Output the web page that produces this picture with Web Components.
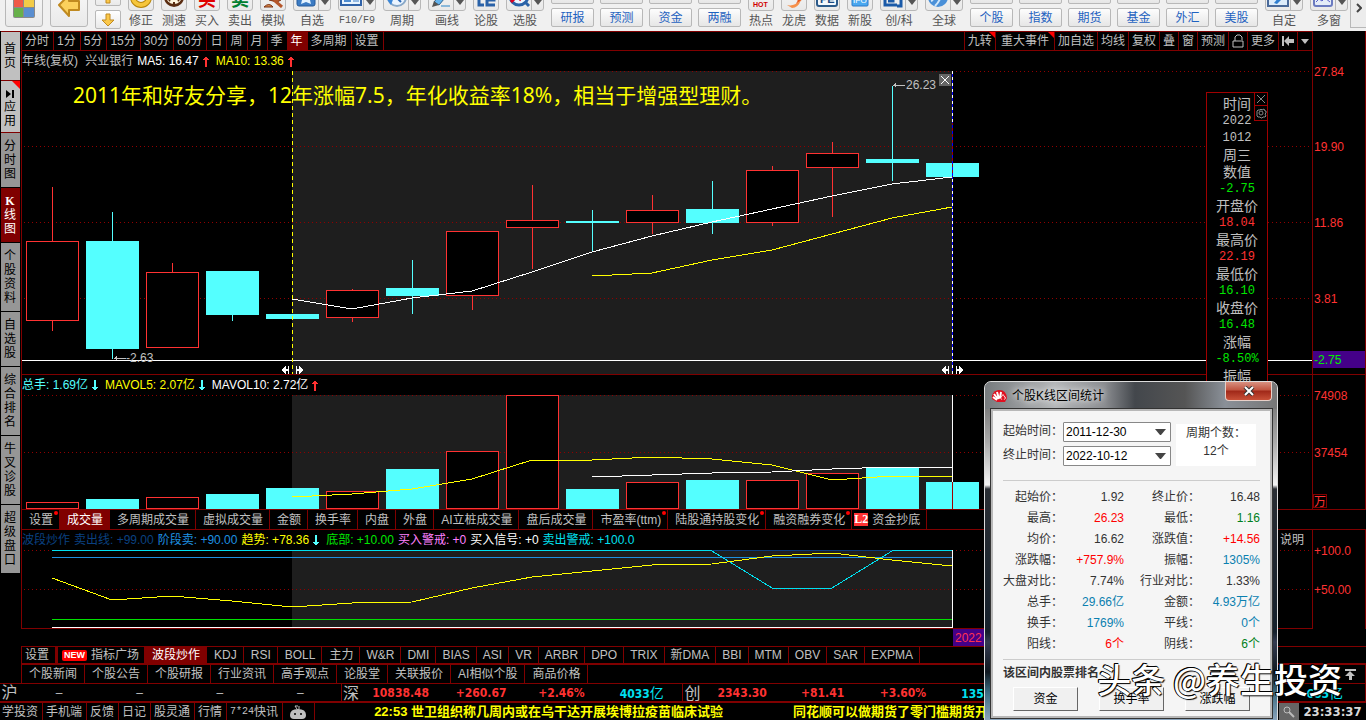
<!DOCTYPE html>
<html lang="zh-CN">
<head>
<meta charset="utf-8">
<title>兴业银行 年线</title>
<style>
html, body { margin: 0; background: #000; overflow: hidden; }
body { font: 12px/16px "Liberation Sans", "Noto Sans CJK SC", sans-serif; color: #c0c0c0; }
</style>
</head>
<body>
<stock-app></stock-app>
<script>
const LINE = '#800000', RED = '#ff3232', CYAN = '#54ffff', YEL = '#ffff00';
const BASE = `*{box-sizing:border-box} button{font:inherit;color:inherit;background:none;border:0;padding:0;margin:0} svg{display:block}`;

function define(name, css, html) {
  customElements.define(name, class extends HTMLElement {
    constructor() {
      super();
      this.attachShadow({ mode: 'open' });
    }
    connectedCallback() {
      this.shadowRoot.innerHTML = `<style>${BASE}${css}</style>` + (typeof html === 'function' ? html(this) : html);
    }
  });
}

/* ---------- toolbar ---------- */
const ICONS = {
  fix: '<circle cx="13" cy="17" r="8" fill="none" stroke="#b8860b" stroke-width="6"/><circle cx="13" cy="17" r="8" fill="none" stroke="#f6c63c" stroke-width="4"/>',
  speed: '<circle cx="13" cy="17" r="10" fill="#5a2d12"/><circle cx="13" cy="16" r="8" fill="#fff7e0"/><path d="M13 16l3 3M8 21l1-1M13 24v-2M18 21l-1-1" stroke="#5a2d12" stroke-width="2"/>',
  buy: '<text x="4" y="26" font-size="18" font-weight="bold" fill="#e00000">买</text>',
  sell: '<text x="4" y="26" font-size="18" font-weight="bold" fill="#008030">卖</text>',
  sim: '<path d="M9 20l6-9 6 9-4 2z" fill="#b5562a" stroke="#7b3010"/><path d="M14 20l8 7" stroke="#b5562a" stroke-width="3"/><path d="M4 27q5-5 9 0z" fill="#d98a4a" stroke="#7b3010"/>',
  star: '<rect x="4" y="8" width="18" height="18" rx="2" fill="#3c7cc4" stroke="#245a9a"/><path d="M13 12l3 5 5 1-4 2 1 4-5-2-5 2 1-4-4-2 5-1z" fill="#e4f3ff"/>',
  doc: '<rect x="3" y="8" width="20" height="17" fill="#e8f4ff" stroke="#2f62a8" stroke-width="2"/><path d="M15 15h6M15 18h6M15 21h6" stroke="#3c7cc4"/><rect x="6" y="14" width="7" height="8" fill="#4f8cd0"/>',
  clock: '<circle cx="14" cy="17" r="9" fill="#eaf4ff" stroke="#88a8c8" stroke-width="2"/><path d="M14 12v6l4 4" stroke="#2a68b8" stroke-width="2" fill="none"/><path d="M3 18l5 7 3-8z" fill="#3a86d8"/>',
  pen: '<path d="M6 22L18 8l4 4L11 25z" fill="#64b4ee" stroke="#33638c"/><path d="M4 27l2-6 5 4z" fill="#555"/><path d="M13 26h9" stroke="#8ab8da" stroke-width="2"/>',
  lun: '<path d="M6 16v9h5M14 14v11h8M14 14h7v6h-7" fill="none" stroke="#2a62a8" stroke-width="3"/>',
  pick: '<circle cx="13" cy="16" r="9" fill="#eef6ff" stroke="#2a62a8" stroke-width="3"/><path d="M5 22l6-6 3 3 5-7" stroke="#e00020" stroke-width="3" fill="none"/><path d="M19 22l4 4" stroke="#2a62a8" stroke-width="3"/>',
  hot: '<circle cx="9" cy="15" r="5" fill="#f9823a"/><circle cx="17" cy="15" r="5" fill="#f9823a"/><circle cx="13" cy="17" r="3" fill="#ffe070"/><text x="5" y="27" font-size="7" font-weight="bold" fill="#d00000">HOT</text>',
  tiger: '<path d="M3 18q6-6 12-2t7-4q2 9-8 12q6-5-2-5t-9-1z" fill="#e85a20"/><path d="M6 25q7 2 14-5q-3 8-9 8z" fill="#f6904a"/>',
  data: '<rect x="3" y="8" width="20" height="18" rx="2" fill="#f4f8fc" stroke="#2b5a8a" stroke-width="2"/><text x="6" y="23" font-size="11" font-weight="bold" fill="#1a4a80">PE</text>',
  ipo: '<rect x="5" y="7" width="16" height="19" rx="1" fill="#4aa8f0" stroke="#2a78c8"/><text x="6" y="23" font-size="8" fill="#fff">IPO</text>',
  cy: '<path d="M5 14v11h12M5 16h8v5H8M17 12v8M21 11v15h-4" fill="none" stroke="#1a5aa8" stroke-width="3"/>',
  globe: '<circle cx="13" cy="17" r="10" fill="#4a90d8"/><path d="M6 12q4 8 0 9M12 8q8 8-2 18M20 12q-5 6 2 6" stroke="#cfe6fa" stroke-width="2" fill="none"/>',
  edit: '<rect x="3" y="8" width="20" height="18" fill="#dcecfb" stroke="#4a6a9a" stroke-width="2"/><path d="M9 23L19 11l3 3-10 10z" fill="#2f7ed0"/>',
  multi: '<rect x="4" y="8" width="18" height="18" rx="2" fill="#e4ecf8" stroke="#6a7ac0" stroke-width="2"/><path d="M6 22l3-3 3 2 3-3 5 4" stroke="#5a62c8" fill="none"/>'
};

define('tool-item', `
  :host{display:block;flex:none}
  button{display:block;color:#555;text-align:center}
  .b{display:flex;height:40px;border:1px solid #b8b8b8;border-radius:3px;background:linear-gradient(#fff,#e9e9e9);overflow:hidden}
  .b>svg{flex:none;margin-top:8px}
  .d{width:12px;border-left:1px solid #b8b8b8;padding:28px 0 0 2px}
  .l{display:block;height:20px;line-height:20px;white-space:nowrap}
  .m{font-family:"Liberation Mono","Noto Sans CJK SC",monospace;font-size:10px}`,
  el => {
    const drop = el.hasAttribute('drop'), label = el.getAttribute('label');
    return `<button><span class="b"><svg width="24" height="28" viewBox="1 0 24 28">${ICONS[el.getAttribute('icon')]}</svg>${drop ? '<span class="d"><svg width="8" height="5"><path d="M0 0h8L4 5z" fill="#555"/></svg></span>' : ''}</span><span class="l ${/^F/.test(label) ? 'm' : ''}">${label}</span></button>`;
  });

define('tool-grid', `
  :host{display:grid;grid-auto-flow:column;grid-auto-columns:43px;grid-template-rows:19px 19px;gap:4px 6px;flex:none;padding-bottom:4px}
  button{border:1px solid #b8b8b8;border-radius:2px;background:linear-gradient(#fdfdfd,#e6e6e6);color:#1e62c0}`,
  el => el.getAttribute('items').split(',').map(t => `<button>${t}</button>`).join(''));

define('app-toolbar', `
  :host{display:flex;height:31px;overflow:hidden;align-items:flex-end;gap:7px;padding-left:5px;background:#f0f0f0}
  .big{width:38px;height:54px;flex:none;border:1px solid #b8b8b8;border-radius:3px;background:linear-gradient(#fff,#e9e9e9);margin-bottom:4px;display:flex;align-items:flex-end;justify-content:center;padding-bottom:8px}
  .ud{display:grid;gap:4px;flex:none;margin-bottom:2px}
  .ud button{width:26px;height:19px;border:1px solid #b8b8b8;border-radius:2px;background:linear-gradient(#fff,#e9e9e9);display:grid;place-items:center}
  .end{display:flex;align-items:flex-end;gap:2px;flex:1}
  .end tool-item+tool-item{margin-left:5px}
  .more{margin-left:auto;flex:none;width:17px;height:48px;margin-bottom:3px;border:1px solid #b8b8b8;background:#ececec;display:grid;justify-items:center;align-items:end;padding-bottom:14px}`, `
  <button class="big" aria-label="首页"><svg width="22" height="26"><rect width="22" height="26" rx="2" fill="#8a8a8a"/><path d="M1 5h9v10H1z" fill="#ef5a48"/><path d="M11 5h10v10H11z" fill="#f2cb48"/><path d="M1 16h9v9H1z" fill="#67b04a"/><path d="M11 16h10v9H11z" fill="#5a8ed0"/></svg></button>
  <button class="big" aria-label="后退"><svg width="24" height="28"><path d="M2 15L12 5v6h10v9H12v6z" fill="#fbd05c" stroke="#c08a20" stroke-linejoin="round" stroke-width="2"/></svg></button>
  <div class="ud"><button aria-label="上"><svg width="14" height="14"><path d="M7 1l6 6H9v6H5V7H1z" fill="#fbc84a" stroke="#c08a20"/></svg></button><button aria-label="下"><svg width="14" height="14"><path d="M7 13l6-6H9V1H5v6H1z" fill="#fbc84a" stroke="#c08a20"/></svg></button></div>
  <tool-item icon="fix" label="修正"></tool-item><tool-item icon="speed" label="测速"></tool-item>
  <tool-item icon="buy" label="买入"></tool-item><tool-item icon="sell" label="卖出"></tool-item>
  <tool-item icon="sim" label="模拟"></tool-item><tool-item icon="star" drop label="自选"></tool-item>
  <tool-item icon="doc" drop label="F10/F9"></tool-item><tool-item icon="clock" drop label="周期"></tool-item>
  <tool-item icon="pen" drop label="画线"></tool-item><tool-item icon="lun" label="论股"></tool-item>
  <tool-item icon="pick" drop label="选股"></tool-item>
  <tool-grid items="资讯,研报,竞价,预测,,资金,陆港,两融"></tool-grid>
  <tool-item icon="hot" label="热点"></tool-item><tool-item icon="tiger" label="龙虎"></tool-item>
  <tool-item icon="data" label="数据"></tool-item><tool-item icon="ipo" label="新股"></tool-item>
  <tool-item icon="cy" drop label="创/科"></tool-item><tool-item icon="globe" drop label="全球"></tool-item>
  <tool-grid items="板块,个股,股指,指数,期权,期货,债券,基金,美股,外汇,港股,美股"></tool-grid>
  <div class="end"><tool-item icon="edit" drop label="自定"></tool-item><tool-item icon="multi" drop label="多窗"></tool-item>
  <button class="more" aria-label="更多"><svg width="6" height="10"><path d="M1 1l4 4-4 4" fill="none" stroke="#444" stroke-width="2"/></svg></button></div>`);

/* ---------- side navigation ---------- */
define('side-nav', `
  :host{display:flex;flex-direction:column;width:21px;padding-left:1px;flex:none;color:#000;line-height:14px}
  button{width:19px;padding:6px 3px;background:#969696;border-bottom:1px solid #000;position:relative;text-align:center}
  button span{display:block;width:12px;word-break:break-all}
  .hd{background:#c0c0c0;min-height:50px;border-top:1px solid ${LINE};border-bottom:1px solid ${LINE}}
  .on{background:${LINE};color:#fff} b{font-family:"Liberation Serif",serif}
  .ap{padding:9px 3px 4px;background:#c0c0c0;border-bottom:1px solid ${LINE}}
  .ap svg{margin:0 0 2px 2px} .ap i{position:absolute;right:0;top:0;border:4px solid;border-color:#f00 #f00 transparent transparent}`, `
  <button class="hd"><span>首页</span></button>
  <button class="ap"><i></i><svg width="9" height="8"><path d="M0 0l5 4-5 4zM6 0h2v8H6z"/></svg><span>应用</span></button>
  <button><span>分时图</span></button>
  <button class="on"><span><b>K</b>线图</span></button>
  <button><span>个股资料</span></button><button><span>自选股</span></button>
  <button><span>综合排名</span></button><button><span>牛叉诊股</span></button><button><span>超级盘口</span></button>`);

/* ---------- tab strips ---------- */
define('tab-strip', `
  :host{display:flex;min-width:0;overflow:hidden;white-space:nowrap}
  :host([left]){border-left:1px solid ${LINE}}
  ::slotted(*){flex:none}`, `<slot></slot>`);

define('tab-item', `
  :host{display:block;border-right:1px solid ${LINE};color:#c0c0c0}
  :host([first]){border-left:1px solid ${LINE}}
  :host([on]){background:${LINE};color:#fff}
  button{height:100%;width:100%;display:flex;align-items:center;gap:4px;padding:0 var(--pr,6px) 0 var(--pl,7px);position:relative;white-space:nowrap}
  :host([dot]) button::after{content:"";position:absolute;right:1px;top:1px;width:4px;height:4px;border-radius:2px;background:#f00}
  :host([flag]) button::after{content:"";position:absolute;right:0;top:0;border:3px solid;border-color:#f00 #f00 transparent transparent}`,
  `<button><slot></slot></button>`);

/* ---------- legends ---------- */
const ARROW = { up: ['#ff3232', 'M3 0l3 4H4v7H2V4H0z'], down: [CYAN, 'M3 11L0 7h2V0h2v7h2z'] };
define('legend-row', `
  :host{display:flex;flex:1;height:20px;align-items:center;gap:4px;white-space:nowrap;border-left:1px solid ${LINE};min-width:0}
  ::slotted([end]){margin-left:auto}`, `<slot></slot>`);
define('legend-value', `
  :host{display:flex;align-items:center;gap:4px;color:var(--c)}
  :host([trend]){margin-right:3px}
  svg{shape-rendering:crispEdges}`,
  el => {
    const a = ARROW[el.getAttribute('trend')];
    return `<slot></slot>${a ? `<svg width="6" height="11"><path d="${a[1]}" fill="${a[0]}"/></svg>` : ''}`;
  });

/* ---------- charts ---------- */
const cx = i => 30 + 60 * i;
const bar = (i, kind, top, bottom, hi, lo) => {
  const x = cx(i), c = kind === 'r' ? RED : CYAN, h = Math.max(bottom - top, 2);
  let s = hi < top ? `<rect x="${x}" y="${hi}" width="1" height="${top - hi}" fill="${c}"/>` : '';
  if (lo > bottom) s += `<rect x="${x}" y="${bottom}" width="1" height="${lo - bottom}" fill="${c}"/>`;
  s += `<rect x="${x - 26}" y="${top}" width="53" height="${h}" fill="${c}"/>`;
  if (kind === 'r') s += `<rect x="${x - 25}" y="${top + 1}" width="51" height="${h - 2}" fill="#000"/>`;
  return s;
};
const curve = (c, start, ys) => `<polyline fill="none" stroke="${c}" points="${ys.map((y, k) => cx(start + k) + ',' + y).join(' ')}"/>`;
const hgrid = ys => ys.map(y => `<line x1="2" x2="100%" y1="${y}" y2="${y}" stroke="#900000" stroke-dasharray="1 3"/>`).join('');
const shade = h => `<rect x="270" y="0" width="660" height="${h}" fill="#1e1e1e"/>`;
const CHART_CSS = `:host{display:block;flex:1;min-width:0;border-left:1px solid ${LINE};position:relative;overflow:hidden}
  svg{width:100%;shape-rendering:crispEdges;font:12px "Liberation Sans",sans-serif}`;

const handle = x => `<path fill="#fff" d="M${x - 11} 299l5-4v3h2v2h-2v3zM${x - 4} 295h1v8h-1zM${x + 4} 295h1v8h-1zM${x + 12} 299l-5-4v3h-2v2h2v3z"/>`;
define('price-chart', CHART_CSS + `
  p{position:absolute;left:51px;top:9px;margin:0;color:${YEL};font:21px/30px "Noto Sans","Noto Sans CJK SC",sans-serif;white-space:nowrap}
  button{position:absolute;left:917px;top:3px;width:12px;height:12px;background:#666;display:grid;place-items:center}
  button svg{width:8px;shape-rendering:auto}`,
  () => {
    const k = [['r',170,250,116,260],['c',170,278,141,288],['r',201,277,192,277],['c',200,244,200,250],['c',243,248,243,248],
      ['r',219,247,218,251],['c',217,225,189,243],['r',160,225,160,239],['r',149,157,114,198],['c',150,152,139,181],
      ['r',139,152,124,163],['c',138,152,110,163],['r',99,152,95,155],['r',82,97,71,146],['c',88,92,15,110],['c',92,106,92,106]];
    return `<svg height="303">${shade(303)}${hgrid([0, 75, 151, 227])}
      ${k.map((v, i) => bar(i, ...v)).join('')}
      ${curve('#fff', 4, [228,238,227,220,201,181,165,151,138,125,113,106])}
      ${curve(YEL, 9, [205,202,189,179,163,147,136])}
      <rect x="0" y="289" width="100%" height="1" fill="#fff"/>
      <line x1="270" x2="270" y1="0" y2="303" stroke="${YEL}" stroke-dasharray="4 3"/>
      <rect x="930" y="0" width="1" height="303" fill="#00f"/><line x1="930" x2="930" y1="0" y2="303" stroke="#fff" stroke-dasharray="3 3"/>
      <rect x="930" y="52" width="1" height="54" fill="#a00000"/><line x1="930" x2="930" y1="54" y2="106" stroke="#00f" stroke-dasharray="3 3"/>
      <path d="M871 14h12v1h-12zM871 14l3-2v5zM92 287h12v1H92zM92 287l3-2v5z" fill="#c0c0c0"/>
      <text x="884" y="18" fill="#c0c0c0">26.23</text><text x="104" y="291" fill="#c0c0c0">-2.63</text>
      ${handle(270)}${handle(930)}</svg>
      <p>2011年和好友分享，12年涨幅7.5，年化收益率18%，相当于增强型理财。</p>
      <button aria-label="关闭区间"><svg height="8"><path d="M0 0l8 8M8 0L0 8" stroke="#fff"/></svg></button>`;
  });

define('volume-chart', CHART_CSS, () => {
  const v = [['r',107],['c',104],['r',102],['c',99],['c',93],['r',96],['c',74],['r',56],['r',0],['c',94],['r',87],['c',85],['r',85],['r',78],['c',72],['c',87]];
  return `<svg height="114">${shade(114)}${hgrid([0, 57])}
    ${v.map(([k, t], i) => bar(i, k, t, 114, t, 114)).join('')}
    ${curve(YEL, 4, [102,99,94,84,65,65,62,64,70,85,81,81])}
    ${curve('#fff', 9, [82,80,78,77,74,72,72])}
    <rect x="930" y="0" width="1" height="87" fill="#fff"/><rect x="930" y="87" width="1" height="27" fill="#a00000"/></svg>`;
});

define('wave-chart', CHART_CSS + `:host{border-bottom:1px solid ${LINE}}`, () => `<svg height="78">${shade(78)}${hgrid([0, 39])}
    <path d="M30 0h900v1H30z" fill="#0a3c7c"/><path d="M30 7h900v1H30z" fill="#1e90e0"/>
    <path d="M30 69h900v1H30z" fill="#00e000"/><path d="M30 77h900v1H30z" fill="#fff"/>
    <polyline fill="none" stroke="#00e0f0" points="690,1 750,38 810,38 870,1"/><path d="M30 0h660v1H30zM870 0h60v1h-60z" fill="#00e0f0"/>
    ${curve(YEL, 0, [28,50,46,51,57,53,52,38,27,21,15,14,6,3,10,16])}
    <rect x="930" y="0" width="1" height="78" fill="#fff"/></svg>`);

define('value-axis', `
  :host{display:block;width:54px;flex:none;border-left:1px solid ${LINE};border-right:1px solid ${LINE}}
  svg{width:100%;overflow:visible;font:12px "Liberation Sans","Noto Sans CJK SC",sans-serif}`,
  el => {
    const marks = (el.getAttribute('marks') || '').split(',').filter(Boolean).map(m => m.split('@'));
    const h = el.getAttribute('height') || 20;
    let s = marks.map(([t, y]) => `<text x="1" y="${+y + 4}" fill="${RED}">${t}</text>`).join('');
    if (el.hasAttribute('cursor')) s += `<rect y="280" width="100%" height="17" fill="#440088"/><text x="1" y="293" fill="#00f000">-2.75</text>`;
    if (el.hasAttribute('unit')) s += `<rect width="14" height="14" y="99" fill="${LINE}"/><rect width="12" height="12" x="1" y="100"/><text x="1" y="111" fill="${RED}">万</text>`;
    return `<svg height="${h}">${s}</svg>`;
  });

define('date-row', `:host{display:block} svg{width:100%}`,
  `<svg height="17" font-family="Liberation Sans" font-size="12"><rect x="932" width="80" height="17" fill="#440088"/><text x="934" y="13" fill="#ff3250">2022</text></svg>`);

/* ---------- cursor info panel ---------- */
define('info-panel', `
  :host{position:absolute;top:92px;right:98px;width:62px;height:300px;overflow:hidden;border:1px solid #a00000;background:#000;padding-top:3px;text-align:center}
  div{line-height:17px;height:17px;font-size:14px;color:#c0c0c0}
  .n{font-family:"Liberation Mono",monospace;font-size:12px}.g{color:#00e600}.r{color:#ff3232}
  .t{position:absolute;right:0;top:0;width:13px;height:28px;border-left:1px solid #a00000;border-bottom:1px solid #a00000;background:#000}
  .t button{display:grid;place-items:center;width:12px;height:13px;border-bottom:1px solid #a00000}.t button+button{border:0;height:14px}`, () => {
    const rows = [['时间'],['2022','n'],['1012','n'],['周三'],['数值'],['-2.75','n g'],['开盘价'],['18.04','n r'],['最高价'],['22.19','n r'],
      ['最低价'],['16.10','n g'],['收盘价'],['16.48','n g'],['涨幅'],['-8.50%','n g'],['振幅']];
    return rows.map(([t, c]) => `<div class="${c || ''}">${t}</div>`).join('') +
      `<span class="t"><button aria-label="关闭"><svg width="8" height="8"><path d="M0 0l8 8M8 0L0 8" stroke="#888"/></svg></button><button aria-label="选项"><svg width="11" height="11" fill="none" stroke="#888"><path d="M5 1l1 1 2-1 1 2h1v2l-1 1 1 2-1 1H7L6 10H5L4 9H2L1 8V3l1-1h2z"/><circle cx="5" cy="5" r="2"/></svg></button></span>`;
  });

/* ---------- range statistics dialog ---------- */
define('stats-dialog', `
  :host{position:absolute;top:381px;right:88px;width:294px;padding:0 5px 6px 6px;border-radius:7px 7px 0 0;border:1px solid #ddd;color:#333;
    background:linear-gradient(#888c90 0,#777 20px,#aaa 60px,#f4f4f4 103px,#2a2e34 107px,#15202c 250px,#343b50 260px,#101820 290px,#3a6a80 310px,#90a8c0 340px)}
  header{display:flex;align-items:center;height:27px;gap:4px;margin:0 -5px 0 -6px;padding-left:6px;color:#000;background:linear-gradient(90deg,#777b7e,#b4b6b8 70px,#8a8c90 120px,#43474c 150px,#555 200px,#8a9098 240px,#777);border-radius:6px 6px 0 0}
  h1{font:12px/18px "Liberation Sans","Noto Sans CJK SC",sans-serif;margin:0;text-shadow:0 0 6px #fff,0 0 8px #ddd}
  .x{margin:0 5px 0 auto;align-self:flex-start;width:47px;height:19px;border:1px solid #e8d0c8;border-top:0;border-radius:0 0 4px 4px;background:linear-gradient(#d89080,#c05440 45%,#a02818 50%,#c85038);display:grid;place-items:center}
  main{border:2px solid #b8b8b8;outline:1px solid #333;background:#f5f5f5;padding:11px 10px 5px}
  .top{display:grid;grid-template-columns:60px 108px 85px;gap:4px 0;justify-content:start}
  label{line-height:18px}
  select{appearance:none;width:108px;height:20px;border:1px solid #888;border-radius:1px;padding:0 2px;margin:0;background:#fff;font:12px "Liberation Sans",sans-serif;color:#000}
  .s{position:relative;display:block;height:20px}.s svg{position:absolute;right:5px;top:7px}
  .c{grid-column:3;grid-row:1/3;background:#fff;margin:2px 0 0 5px;width:80px;height:42px;text-align:center;line-height:18px}
  hr{border:0;border-top:1px solid #ccc;margin:14px 0 5px}
  table{border-spacing:0;table-layout:fixed;width:100%}
  th,td{padding:0;font-weight:normal;text-align:right;height:21px;white-space:nowrap}
  .r{color:#f00}.g{color:#008020}.b{color:#0a80b0}
  table+hr{margin:5px 0 4px}
  h2{font:bold 12px/18px "Liberation Sans","Noto Sans CJK SC",sans-serif;margin:0 0 5px}
  .btn{display:flex;gap:21px;padding-left:10px}
  .btn button{width:65px;height:24px;background:#f0f0f0;color:#000;border:1px solid;border-color:#fff #666 #666 #fff}`, () => {
    const rows = [['起始价','1.92','','终止价','16.48',''],['最高','26.23','r','最低','1.16','g'],['均价','16.62','','涨跌值','+14.56','r'],
      ['涨跌幅','+757.9%','r','振幅','1305%','b'],['大盘对比','7.74%','','行业对比','1.33%',''],['总手','29.66亿','b','金额','4.93万亿','b'],
      ['换手','1769%','b','平线','0个','b'],['阳线','6个','r','阴线','6个','g']];
    const tri = '<svg width="11" height="6"><path d="M0 0h11L6 6H5z" fill="#444"/></svg>';
    return `<header><svg width="17" height="14"><path d="M1 10Q0 3 7 1q8-1 9 8l-2 4H6z" fill="#e01020"/><path d="M3 5l4 5M6 3l2 7M10 3L9 9M2 8l4 3" stroke="#fff" stroke-width="2"/><path d="M12 5l3 4-2 2h-2L9 9z" fill="#fff"/><path d="M12 6l2 3-2 3-2-3z" fill="#e01020"/></svg><h1>个股K线区间统计</h1>
      <button class="x" aria-label="关闭"><svg width="12" height="10"><path d="M2 1l8 8M10 1L2 9" stroke="#333" stroke-width="4"/><path d="M2 1l8 8M10 1L2 9" stroke="#fff" stroke-width="2"/></svg></button></header>
    <main><div class="top">
      <label for="a">起始时间：</label><span class="s"><select id="a"><option>2011-12-30</option></select>${tri}</span>
      <label for="b">终止时间：</label><span class="s"><select id="b"><option>2022-10-12</option></select>${tri}</span>
      <div class="c">周期个数：<br>12个</div></div><hr>
      <table><colgroup><col style="width:60px"><col style="width:61px"><col style="width:76px"><col></colgroup>
      ${rows.map(r => `<tr><th scope="row">${r[0]}：</th><td class="${r[2]}">${r[1]}</td><th scope="row">${r[3]}：</th><td class="${r[5]}">${r[4]}</td></tr>`).join('')}</table><hr>
      <h2>该区间内股票排名</h2><div class="btn"><button>资金</button><button>换手率</button><button>涨跌幅</button></div></main>`;
  });

/* ---------- index quotes ---------- */
define('index-quote', `
  :host{display:grid;grid-template-columns:19px repeat(4,1fr);align-items:center;text-align:center;border-right:1px solid ${LINE};height:17px;min-width:0}
  b{font:bold 12px/17px "DejaVu Sans Condensed","DejaVu Sans","Noto Sans CJK SC",sans-serif;color:#ff3232;white-space:nowrap}
  i{font:16px/17px "Noto Sans CJK SC",sans-serif}.c{color:#00e0f0}.c i{font-size:14px;line-height:16px}.n{font-size:16px;line-height:17px}`,
  el => {
    const v = el.getAttribute('values').split(',');
    return `<span class="n">${el.getAttribute('name') || ''}</span>` + v.map((t, k) => t === '–' ? '<span>–</span>' : `<b class="${k === 3 ? 'c' : ''}">${t.replace('亿', '<i>亿</i>')}</b>`).join('');
  });
define('index-bar', `
  :host{display:grid;grid-template-columns:repeat(4,1fr);border-top:1px solid ${LINE};border-bottom:2px solid ${LINE}}`, `
  <index-quote name="沪" values="–,–,–,–"></index-quote>
  <index-quote name="深" values="10838.48,+260.67,+2.46%,4033亿"></index-quote>
  <index-quote name="创" values="2343.30,+81.41,+3.60%,1358亿"></index-quote>
  <index-quote values=",,,685亿"></index-quote>`);

/* ---------- bottom ticker ---------- */
define('ticker-bar', `
  :host{display:flex;height:17px;align-items:stretch;white-space:nowrap;overflow:hidden}
  tab-item{--pl:3px;--pr:4px;flex:none}
  tab-item:first-of-type{--pl:2px}
  .news{flex:1;min-width:0;overflow:hidden;display:flex;gap:70px;padding-left:59px}
  .news a{color:${YEL};text-decoration:none;font:bold 13px/17px "Liberation Sans","Noto Sans CJK SC",sans-serif}
  time{font:bold 13px/17px "DejaVu Sans Condensed","DejaVu Sans",sans-serif;color:#d8d8d8;width:67px;text-align:center;flex:none}
  .q{width:20px;background:#666;display:grid;place-items:center;flex:none}
  .m{font-family:"Liberation Mono",monospace;font-size:10px;margin-right:-4px}`, `
  <tab-item>学投资</tab-item><tab-item>手机端</tab-item><tab-item>反馈</tab-item><tab-item>日记</tab-item><tab-item>股灵通</tab-item><tab-item>行情</tab-item>
  <tab-item><span class="m">7*24</span>快讯</tab-item>
  <tab-item aria-label="机器人"><svg width="24" height="17"><path d="M4 12q0-6 8-6t8 6q0 4-4 4H8q-4 0-4-4z" fill="#c0c0c0"/><path d="M11 6l-2-3h3M13 6V3" stroke="#c0c0c0" fill="none"/><circle cx="9" cy="11" r="1"/><circle cx="15" cy="11" r="1"/></svg></tab-item>
  <div class="news"><a href="#">22:53 世卫组织称几周内或在乌干达开展埃博拉疫苗临床试验</a><a href="#">同花顺可以做期货了零门槛期货开户</a></div>
  <button class="q" aria-label="搜索"><svg width="12" height="12"><circle cx="4" cy="4" r="3" fill="none" stroke="#bbb" stroke-width="1"/><path d="M6 6l5 5" stroke="#bbb" stroke-width="2"/></svg></button>
  <time>23:33:37</time>`);

define('water-mark', `
  :host{position:absolute;right:24px;top:658px;font:500 34px/42px "Noto Sans CJK SC",sans-serif;color:#fff;white-space:nowrap;pointer-events:none;
    text-shadow:-1px -1px 0 #000,0 -1px 0 #000,-1px 0 0 #000,1px 1px 1px #000}`, `<slot></slot>`);

/* ---------- page ---------- */
const tabs = (list, first) => list.map((t, i) => {
  const dot = t.endsWith('*'), on = t.startsWith('!');
  return `<tab-item${on ? ' on' : ''}${dot ? ' dot' : ''}${first && !i ? ' first' : ''}>${t.replace(/[!*]/g, '')}</tab-item>`;
}).join('');

define('stock-app', `
  :host{display:flex;flex-direction:column;min-height:100vh;position:relative;overflow:hidden}
  .body{display:flex}.main{flex:1;min-width:0;display:flex;flex-direction:column}
  .row{display:flex}.line{border-bottom:1px solid ${LINE}}
  .top{flex:1;display:flex;min-width:0;height:20px;border:1px solid ${LINE};border-width:1px 0 1px 1px}
  .top tab-item{--pl:3px;--pr:4px}.top .rt{margin-left:auto}
  .top .rt tab-item{--pl:3px;--pr:3px}.top .rt .w{--pl:5px;--pr:5px}
  .vt{height:20px}.it{height:19px;border:1px solid ${LINE};border-width:1px 0 2px 1px}.it .s{border-right-width:3px;--pl:3px;--pr:6px}
  .it .n{--pl:4px;--pr:5px}.it tab-item:nth-child(n+8){--pl:6px}
  .nt{height:18px;border-right:1px solid ${LINE}}
  .nt tab-item{--pl:7px;--pr:7px}
  .new{background:#f00;color:#fff;border-radius:2px;font:bold 9px/11px "Liberation Sans",sans-serif;padding:0 2px}
  .l2{background:#ff3232;color:#fff;font:bold 12px/13px "Liberation Serif",serif;width:14px;text-align:center;margin-left:-5px}
  .end{margin-left:auto;width:20px;padding-top:4px}`, `
  <app-toolbar></app-toolbar>
  <div class="body"><side-nav></side-nav><div class="main">
    <div class="row"><div class="top">
      <tab-strip>${tabs(['分时','1分','5分','15分','30分','60分','日','周','月','季','!年','多周期','设置'])}</tab-strip>
      <tab-strip class="rt"><tab-item first flag>九转</tab-item><tab-item class="w" flag>重大事件</tab-item>${tabs(['加自选','均线','复权','叠','窗','预测'])}
        <tab-item aria-label="锁定"><svg width="12" height="14" fill="none" stroke="#c0c0c0"><path d="M3 7V3l2-2h3l2 2v3M1 7h10v6H1z"/></svg></tab-item><tab-item>更多</tab-item>
        <tab-item aria-label="收起"><svg width="12" height="12" fill="#c0c0c0"><path d="M0 1h2v10H0zM2 6l5-5v3h5v4H7v3z"/></svg></tab-item>
        <tab-item aria-label="展开" style="border:0"><svg width="8" height="5"><path d="M0 0h8L4 5z" fill="#c0c0c0"/></svg></tab-item></tab-strip>
    </div><value-axis></value-axis></div>
    <div class="row"><legend-row><span>年线(复权)</span><span>&nbsp;兴业银行</span><legend-value trend="up" style="--c:#fff">MA5: 16.47</legend-value><legend-value trend="up" style="--c:#ff0">MA10: 13.36</legend-value></legend-row><value-axis></value-axis></div>
    <div class="row line"><price-chart></price-chart><value-axis height="303" cursor marks="27.84@1,19.90@76,11.86@152,3.81@228"></value-axis></div>
    <div class="row"><legend-row><legend-value trend="down" style="--c:#54ffff">总手: 1.69亿</legend-value><legend-value trend="down" style="--c:#ff0">MAVOL5: 2.07亿</legend-value><legend-value trend="up" style="--c:#fff">MAVOL10: 2.72亿</legend-value></legend-row><value-axis></value-axis></div>
    <div class="row line"><volume-chart></volume-chart><value-axis height="114" unit marks="74908@1,37454@58"></value-axis></div>
    <tab-strip class="vt line" left>${tabs(['设置*','!成交量','多周期成交量','虚拟成交量','金额','换手率','内盘','外盘','AI立桩成交量','盘后成交量','市盈率(ttm)*','陆股通持股变化*','融资融券变化*'])}<tab-item><span class="l2">L2</span>资金抄底</tab-item></tab-strip>
    <div class="row"><legend-row><legend-value style="--c:#0a4080">波段炒作</legend-value><legend-value style="--c:#0a4080">卖出线: +99.00</legend-value><legend-value style="--c:#1e90e0">阶段卖: +90.00</legend-value><legend-value trend="down" style="--c:#ff0">趋势: +78.36</legend-value><legend-value style="--c:#00e600">底部: +10.00</legend-value><legend-value style="--c:#ff80ff">买入警戒: +0</legend-value><legend-value style="--c:#fff">买入信号: +0</legend-value><legend-value style="--c:#00e0f0">卖出警戒: +100.0</legend-value><span end style="padding-right:8px">说明</span></legend-row><value-axis></value-axis></div>
    <div class="row"><wave-chart></wave-chart><value-axis height="78" marks="+100.0@1,+50.00@40"></value-axis></div>
    <date-row></date-row>
    <tab-strip class="it"><tab-item class="s">设置</tab-item><tab-item class="n"><span class="new">NEW</span>指标广场</tab-item>${tabs(['!波段炒作','KDJ','RSI','BOLL','主力','W&amp;R','DMI','BIAS','ASI','VR','ARBR','DPO','TRIX','新DMA','BBI','MTM','OBV','SAR','EXPMA'])}</tab-strip>
    <tab-strip class="nt" left>${tabs(['个股新闻','个股公告','个股研报','行业资讯','高手观点','论股堂','关联报价','AI相似个股','商品价格'])}<span class="end"><svg width="11" height="11" fill="#c0c0c0"><path d="M0 0h11v2H0zM5 2l5 5H7v4H4V7H0z"/></svg></span></tab-strip>
  </div></div>
  <index-bar></index-bar>
  <ticker-bar></ticker-bar>
  <info-panel></info-panel>
  <stats-dialog></stats-dialog>
  <water-mark>头条 @养生投资</water-mark>`);
</script>
</body>
</html>
